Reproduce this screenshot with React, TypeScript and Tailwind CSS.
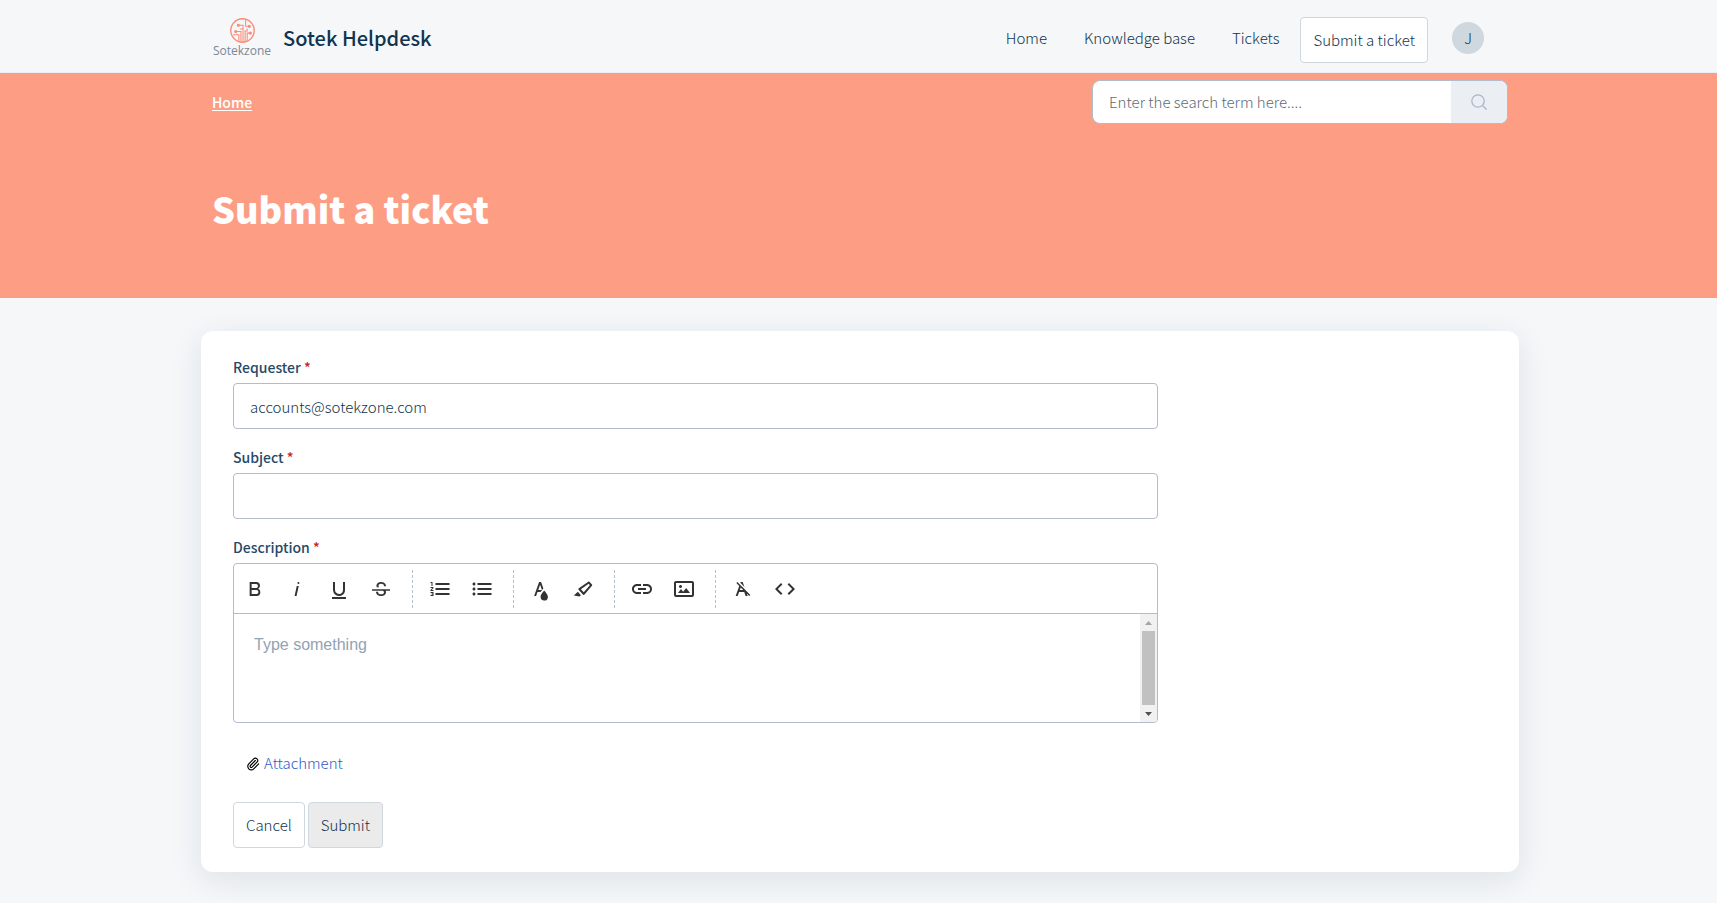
import React from "react";
import { Paperclip } from "lucide-react";

const toolGroups = [
  [
    {
      label: "Bold",
      d: "M15.25,11.8h0A3.68,3.68,0,0,0,17,9a3.93,3.93,0,0,0-3.86-4H6.65V19h7a3.74,3.74,0,0,0,3.7-3.78V15.1A3.64,3.64,0,0,0,15.25,11.8ZM8.65,7h4.2a2.09,2.09,0,0,1,2,1.3,2.09,2.09,0,0,1-1.37,2.61,2.23,2.23,0,0,1-.63.09H8.65Zm4.6,10H8.65V13h4.6a2.09,2.09,0,0,1,2,1.3,2.09,2.09,0,0,1-1.37,2.61A2.23,2.23,0,0,1,13.25,17Z",
    },
    { label: "Italic", d: "M11.76,9h2l-2.2,10h-2Zm1.68-4a1,1,0,1,0,1,1A1,1,0,0,0,13.44,5Z" },
    {
      label: "Underline",
      d: "M19,20v2H5V20Zm-3-6.785a4,4,0,0,1-5.74,3.4A3.75,3.75,0,0,1,8,13.085V5.005H6v8.21a6,6,0,0,0,8,5.44,5.851,5.851,0,0,0,4-5.65v-8H16ZM16,5v0h2V5ZM8,5H6v0H8Z",
    },
    {
      label: "Strikethrough",
      d: "M3,12.20294H21v1.5H16.63422a3.59782,3.59782,0,0,1,.34942,1.5929,3.252,3.252,0,0,1-1.31427,2.6997A5.55082,5.55082,0,0,1,12.20251,19a6.4421,6.4421,0,0,1-2.62335-.539,4.46335,4.46335,0,0,1-1.89264-1.48816,3.668,3.668,0,0,1-.67016-2.15546V14.704h.28723v-.0011h.34149v.0011H9.02v.11334a2.18275,2.18275,0,0,0,.85413,1.83069,3.69,3.69,0,0,0,2.32836.67926,3.38778,3.38778,0,0,0,2.07666-.5462,1.73346,1.73346,0,0,0,.7013-1.46655,1.69749,1.69749,0,0,0-.647-1.43439,3.00525,3.00525,0,0,0-.27491-.17725H3ZM16.34473,7.05981A4.18163,4.18163,0,0,0,14.6236,5.5462,5.627,5.627,0,0,0,12.11072,5,5.16083,5.16083,0,0,0,8.74719,6.06213,3.36315,3.36315,0,0,0,7.44006,8.76855a3.22923,3.22923,0,0,0,.3216,1.42786h2.59668c-.08338-.05365-.18537-.10577-.25269-.16064a1.60652,1.60652,0,0,1-.65283-1.30036,1.79843,1.79843,0,0,1,.68842-1.5108,3.12971,3.12971,0,0,1,1.96948-.55243,3.04779,3.04779,0,0,1,2.106.6687,2.35066,2.35066,0,0,1,.736,1.83258v.11341h2.00317V9.17346A3.90013,3.90013,0,0,0,16.34473,7.05981Z",
    },
  ],
  [
    {
      label: "Ordered list",
      d: "M2.5,16h2v.5h-1v1h1V18h-2v1h3V15h-3Zm1-7h1V5h-2V6h1Zm-1,2H4.3L2.5,13.1V14h3V13H3.7l1.8-2.1V10h-3Zm5-5V8h14V6Zm0,12h14V16H7.5Zm0-5h14V11H7.5Z",
    },
    {
      label: "Unordered list",
      d: "M4,10.5c-.8,0-1.5.7-1.5,1.5s.7,1.5,1.5,1.5,1.5-.7,1.5-1.5S4.8,10.5,4,10.5ZM4,5.5c-.8,0-1.5.7-1.5,1.5S3.2,8.5,4,8.5,5.5,7.8,5.5,7,4.8,5.5,4,5.5Zm0,10c-.8,0-1.5.7-1.5,1.5s.7,1.5,1.5,1.5,1.5-.7,1.5-1.5S4.8,15.5,4,15.5ZM7.5,6V8h14V6Zm0,12h14V16H7.5Zm0-5h14V11H7.5Z",
    },
  ],
  [
    {
      label: "Text color",
      d: "M15.2,13.494s-3.6,3.9-3.6,6.3a3.65,3.65,0,0,0,7.3.1v-.1C18.9,17.394,15.2,13.494,15.2,13.494Zm-1.47-1.357.669-.724L12.1,5h-2l-5,14h2l1.43-4h2.943A24.426,24.426,0,0,1,13.726,12.137ZM11.1,7.8l1.86,5.2H9.244Z",
    },
    {
      label: "Background color",
      d: "M9.91752,12.24082l7.74791-5.39017,1.17942,1.29591-6.094,7.20747L9.91752,12.24082M7.58741,12.652l4.53533,4.98327a.93412.93412,0,0,0,1.39531-.0909L20.96943,8.7314A.90827.90827,0,0,0,20.99075,7.533l-2.513-2.76116a.90827.90827,0,0,0-1.19509-.09132L7.809,11.27135A.93412.93412,0,0,0,7.58741,12.652ZM2.7939,18.52772,8.41126,19.5l1.47913-1.34617-3.02889-3.328Z",
    },
  ],
  [
    {
      label: "Insert link",
      d: "M3.9 12c0-1.71 1.39-3.1 3.1-3.1h4V7H7c-2.76 0-5 2.24-5 5s2.24 5 5 5h4v-1.9H7c-1.71 0-3.1-1.39-3.1-3.1zM8 13h8v-2H8v2zm9-6h-4v1.9h4c1.71 0 3.1 1.39 3.1 3.1s-1.39 3.1-3.1 3.1h-4V17h4c2.76 0 5-2.24 5-5s-2.24-5-5-5z",
    },
    {
      label: "Insert image",
      d: "M14.2,11l3.8,5H6l3-4l2.1,2.7L14.2,11z M8.5,11c0.8,0,1.5-0.7,1.5-1.5S9.3,8,8.5,8S7,8.7,7,9.5C7,10.3,7.7,11,8.5,11z M22,6v12c0,1.1-0.9,2-2,2H4c-1.1,0-2-0.9-2-2V6c0-1.1,0.9-2,2-2h16C21.1,4,22,4.9,22,6z M20,8.8V6H4v12h16V8.8z",
    },
  ],
  [
    {
      label: "Clear formatting",
      d: "M11.48,10.09l-1.2-1.21L8.8,7.41,6.43,5,5.37,6.1,8.25,9,4.66,19h2l1.43-4h5.14l1.43,4h2l-.89-2.51L18.27,19l1.07-1.06L14.59,13.2ZM8.8,13l.92-2.56L12.27,13Zm.56-7.15L9.66,5h2l1.75,4.9Z",
    },
    {
      label: "Code view",
      d: "M9.4,16.6,4.8,12,9.4,7.4,8,6,2,12l6,6Zm5.2,0L19.2,12,14.6,7.4,16,6l6,6-6,6Z",
    },
  ],
];

function Logo() {
  return (
    <span className="flex w-[60px] flex-col items-center">
      <svg viewBox="0 0 48 48" className="size-[25px]" fill="none" stroke="#fb8a76" strokeWidth="2" aria-hidden="true">
        <circle cx="24" cy="24" r="22.5" strokeWidth="2.6" />
        <path d="M21 45V26h-9M25 46V21h-6M29 46V25M33 44V29h5M17 44V32H6M28 25h5V20" />
        <path d="M30 3v13h6M25 21V14h-9" />
        <circle cx="16" cy="14" r="2" fill="#fb8a76" />
        <circle cx="11" cy="26" r="2" fill="#fb8a76" />
        <circle cx="39" cy="29" r="2" fill="#fb8a76" />
        <circle cx="37" cy="16" r="2" fill="#fb8a76" />
      </svg>
      <span className="font-['Open_Sans',sans-serif] text-xs font-normal leading-4 text-[#7d8794]">Sotekzone</span>
    </span>
  );
}

function Field({ id, label, children }: { id: string; label: string; children: React.ReactNode }) {
  return (
    <div className="flex flex-col">
      <label htmlFor={id} className="mb-1 text-[14px] font-medium leading-6 text-[#264966]">
        {label} <span className="text-[#c82124]">*</span>
      </label>
      {children}
    </div>
  );
}

const inputClass =
  "h-[46px] w-full rounded-[4px] border border-[#b0bdcc] bg-white px-4 text-[#12344d] outline-none";
const buttonClass =
  "flex h-[46px] items-center justify-center rounded-[4px] border border-[#cfd7df] px-3 text-[#12344d]";

export default function App() {
  return (
    <div className="min-h-screen bg-[#f5f7f9] font-['Noto_Sans_CJK_SC',sans-serif] text-[15px] font-light text-[#12344d]">
      <header className="h-[73px] border-b border-[#ebeff3] pl-[3px]">
        <div className="mx-auto flex h-full max-w-[1318px] items-center justify-between px-[11px] pt-1">
          <a href="#" className="flex items-center gap-[11px]">
            <Logo />
            <span className="text-[20px] font-medium leading-6">Sotek Helpdesk</span>
          </a>
          <div className="flex items-center pr-6">
            <nav className="flex items-center gap-[37px] pr-[21px]">
              <a href="#">Home</a>
              <a href="#">Knowledge base</a>
              <a href="#">Tickets</a>
            </nav>
            <a href="#" className={`${buttonClass} mt-1 bg-white`}>
              Submit a ticket
            </a>
            <button type="button" aria-label="Account" className="ml-6 size-8 rounded-full bg-[#cfd7df]">
              J
            </button>
          </div>
        </div>
      </header>

      <section className="h-[225px] bg-[#fd9e84] pl-[3px] text-white">
        <div className="mx-auto max-w-[1318px] px-[11px] pt-[7px]">
          <div className="flex items-center justify-between">
            <a href="#" className="text-[14px] font-medium underline underline-offset-2">
              Home
            </a>
            <form
              className="flex h-[44px] w-[416px] overflow-hidden rounded-lg border border-[#b0bdcc] bg-white"
              onSubmit={(e) => e.preventDefault()}
            >
              <input
                type="text"
                aria-label="Search"
                placeholder="Enter the search term here...."
                className="min-w-0 flex-1 px-4 text-[#12344d] outline-none placeholder:text-[#5f6973]"
              />
              <button
                type="submit"
                aria-label="Search"
                className="flex w-[56px] items-center justify-center bg-[#ebeef3]"
              >
                <svg viewBox="0 0 16 16" className="size-4" fill="none" stroke="#a9b8c6" strokeWidth="1.3" aria-hidden="true">
                  <circle cx="7" cy="7" r="6.2" />
                  <path d="M11.5 11.5L15.6 15.6" />
                </svg>
              </button>
            </form>
          </div>
          <h1 className="mt-[60px] text-[36px] font-black leading-[48px]">Submit a ticket</h1>
        </div>
      </section>

      <main className="pb-8 pl-[3px] pt-[33px]">
        <div className="mx-auto max-w-[1318px] rounded-xl bg-white px-8 pb-6 pt-6 shadow-[0_8px_32px_rgba(24,50,71,0.1)]">
          <form className="flex max-w-[925px] flex-col gap-4" onSubmit={(e) => e.preventDefault()}>
            <Field id="requester" label="Requester">
              <input id="requester" type="email" defaultValue="accounts@sotekzone.com" className={inputClass} />
            </Field>
            <Field id="subject" label="Subject">
              <input id="subject" type="text" className={inputClass} />
            </Field>
            <Field id="description" label="Description">
              <div className="overflow-hidden rounded-[4px] border border-[#b0bdcc]">
                <div className="flex h-[50px] items-center border-b border-[#b0bdcc]">
                  {toolGroups.map((group, i) => (
                    <React.Fragment key={i}>
                      {i > 0 && (
                        <span className="ml-[10px] mr-[6px] h-[38px] w-px border-l border-dashed border-[#b5bfca]" />
                      )}
                      {group.map((tool) => (
                        <button
                          key={tool.label}
                          type="button"
                          aria-label={tool.label}
                          className="mx-0.5 flex size-[38px] items-center justify-center"
                        >
                          <svg viewBox="0 0 24 24" className="size-6" fill="#333333" aria-hidden="true">
                            <path d={tool.d} />
                          </svg>
                        </button>
                      ))}
                    </React.Fragment>
                  ))}
                </div>
                <div className="flex h-[108px]">
                  <textarea
                    id="description"
                    placeholder="Type something"
                    className="h-full flex-1 resize-none overflow-hidden px-5 py-[19px] font-['Liberation_Sans',sans-serif] text-base outline-none placeholder:text-[#92a2b1]"
                  />
                  <div className="flex w-[17px] flex-col items-center justify-between bg-[#f1f1f1]" aria-hidden="true">
                    <svg viewBox="0 0 17 17" className="h-[17px] w-[17px]" fill="#a3a3a3">
                      <path d="M5 11h7L8.500 7z" />
                    </svg>
                    <span className="w-[13px] flex-1 bg-[#c1c1c1]" />
                    <svg viewBox="0 0 17 17" className="h-[17px] w-[17px]" fill="#505050">
                      <path d="M5 7h7L8.500 11z" />
                    </svg>
                  </div>
                </div>
              </div>
            </Field>
            <button type="button" className="mt-3 flex items-center gap-1 self-start pl-[13px] leading-6 text-[#2c5cc5]">
              <Paperclip className="mt-0.5 size-[14px] text-black" strokeWidth={2} aria-hidden="true" />
              Attachment
            </button>
            <div className="mt-[11px] flex gap-[3px]">
              <button type="button" className={`${buttonClass} bg-white`}>
                Cancel
              </button>
              <button type="submit" className={`${buttonClass} bg-[#ebebeb]`}>
                Submit
              </button>
            </div>
          </form>
        </div>
      </main>
    </div>
  );
}
